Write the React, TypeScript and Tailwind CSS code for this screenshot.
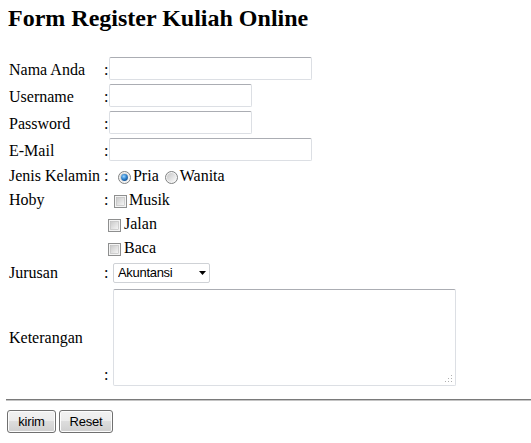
import React from 'react';

// old-style form controls, drawn to look like the classic IE theme
function Radio({ checked = false }: { checked?: boolean }) {
  return (
    <svg width="13" height="13" viewBox="0 0 13 13" className="inline-block">
      <defs>
        <linearGradient id="radioFill" x1="0" y1="0" x2="1" y2="1">
          <stop offset="0%" stopColor="#c6c6c6" />
          <stop offset="100%" stopColor="#fbfbfb" />
        </linearGradient>
        <radialGradient id="radioDot" cx="0.4" cy="0.35" r="0.7">
          <stop offset="0%" stopColor="#9fd8ff" />
          <stop offset="55%" stopColor="#2f83cf" />
          <stop offset="100%" stopColor="#114c8c" />
        </radialGradient>
      </defs>
      <circle cx="6.5" cy="6.5" r="6" fill="#f4f4f4" stroke="#7f8080" />
      <circle cx="6.5" cy="6.5" r="4.6" fill="url(#radioFill)" />
      {checked && <circle cx="6.5" cy="6.5" r="3.4" fill="url(#radioDot)" />}
    </svg>
  );
}

function Checkbox() {
  return (
    <svg width="13" height="13" viewBox="0 0 13 13" className="inline-block">
      <defs>
        <linearGradient id="boxFill" x1="0" y1="0" x2="1" y2="1">
          <stop offset="0%" stopColor="#c9c9c9" />
          <stop offset="100%" stopColor="#f7f7f7" />
        </linearGradient>
      </defs>
      <rect x="0.5" y="0.5" width="12" height="12" fill="#f4f4f4" stroke="#8e8f8f" />
      <rect x="2.5" y="2.5" width="8" height="8" fill="url(#boxFill)" stroke="#b9b9b9" strokeWidth="0.6" />
    </svg>
  );
}

const inputCls =
  'h-[23px] rounded-[2px] border border-[#dcdfe4] border-t-[#abadb3] bg-white outline-none';

const buttonCls =
  'h-[23px] rounded-[3px] border border-[#707070] bg-[linear-gradient(#f2f2f2_0%,#ebebeb_50%,#dddddd_50%,#cfcfcf_100%)] shadow-[inset_0_0_0_1px_#fcfcfc]';

export default function App() {
  return (
    <div className="min-h-screen bg-white pl-[8px] pt-[5px] font-['Liberation_Serif','Times_New_Roman',serif] text-[16px] text-black">
      <h1 className="text-[24px] font-bold leading-[27px]">Form Register Kuliah Online</h1>

      <form className="mt-[25px] flex flex-col" onSubmit={(e) => e.preventDefault()}>
        {/* text fields */}
        <div className="flex h-[23px] items-center">
          <span className="w-[96px] pl-[1px] pt-[2px]">Nama Anda</span>
          <span className="pt-[2px]">:</span>
          <input className={`ml-[1px] w-[203px] ${inputCls}`} />
        </div>
        <div className="mt-[4px] flex h-[23px] items-center">
          <span className="w-[96px] pl-[1px] pt-[2px]">Username</span>
          <span className="pt-[2px]">:</span>
          <input className={`ml-[1px] w-[143px] ${inputCls}`} />
        </div>
        <div className="mt-[4px] flex h-[23px] items-center">
          <span className="w-[96px] pl-[1px] pt-[2px]">Password</span>
          <span className="pt-[2px]">:</span>
          <input type="password" className={`ml-[1px] w-[143px] ${inputCls}`} />
        </div>
        <div className="mt-[4px] flex h-[23px] items-center">
          <span className="w-[96px] pl-[1px] pt-[2px]">E-Mail</span>
          <span className="pt-[2px]">:</span>
          <input className={`ml-[1px] w-[203px] ${inputCls}`} />
        </div>

        {/* radios and checkboxes */}
        <div className="mt-[3px] flex h-[24px] leading-[24px]">
          <span className="w-[96px] pl-[1px]">Jenis Kelamin</span>
          <div className="whitespace-nowrap">
            :<span className="ml-[9.5px] mr-[2px]"><Radio checked /></span>Pria
            <span className="ml-[6px] mr-[2px]"><Radio /></span>Wanita
          </div>
        </div>
        <div className="flex h-[24px] leading-[24px]">
          <span className="w-[96px] pl-[1px]">Hoby</span>
          <div className="whitespace-nowrap">
            :<span className="ml-[5.5px] mr-[2px]"><Checkbox /></span>Musik
          </div>
        </div>
        <div className="flex h-[24px] leading-[24px]">
          <span className="w-[96px] pl-[1px]"></span>
          <div className="whitespace-nowrap">
            <span className="ml-[4px] mr-[3px]"><Checkbox /></span>Jalan
          </div>
        </div>
        <div className="flex h-[24px] leading-[24px]">
          <span className="w-[96px] pl-[1px]"></span>
          <div className="whitespace-nowrap">
            <span className="ml-[4px] mr-[3px]"><Checkbox /></span>Baca
          </div>
        </div>

        {/* select */}
        <div className="mt-[2px] flex h-[22px] items-center leading-[22px]">
          <span className="w-[96px] pl-[1px]">Jurusan</span>
          <span>:</span>
          <div className="relative ml-[4.5px] flex">
            <select className="h-[20px] w-[97px] appearance-none rounded-[2px] border border-[#cfd2d6] bg-white pl-[4px] font-['Liberation_Sans',Arial,sans-serif] text-[13px] leading-[18px] tracking-[-0.3px] outline-none">
              <option>Akuntansi</option>
              <option>Manajemen</option>
              <option>Teknik Informatika</option>
            </select>
            <svg width="7" height="4" viewBox="0 0 7 4" className="pointer-events-none absolute right-[4px] top-[8px]">
              <path d="M0 0H7L3.5 4Z" fill="#000" />
            </svg>
          </div>
        </div>

        {/* textarea */}
        <div className="mt-[5px] flex h-[97px] items-center">
          <span className="w-[96px] pl-[1px]">Keterangan</span>
          <div className="flex h-full items-end">
            <span className="mb-[-1px]">:</span>
            <div className="relative ml-[4.5px]">
              <textarea className="block h-[97px] w-[343px] resize-none rounded-[2px] border border-[#dcdfe4] border-t-[#abadb3] bg-white outline-none" />
              <svg width="9" height="9" viewBox="0 0 9 9" className="pointer-events-none absolute bottom-[3px] right-[3px]">
                <g fill="#b0b0b0">
                  <rect x="7" y="1" width="1" height="1" />
                  <rect x="4" y="4" width="1" height="1" />
                  <rect x="7" y="4" width="1" height="1" />
                  <rect x="1" y="7" width="1" height="1" />
                  <rect x="4" y="7" width="1" height="1" />
                  <rect x="7" y="7" width="1" height="1" />
                </g>
              </svg>
            </div>
          </div>
        </div>

        <div className="mt-[13px] -ml-[2px] h-0 border-t border-b border-t-[#7a7a7a] border-b-[#c4c4c4]" />

        <div className="mt-[9px] -ml-[1px] flex gap-[3px] font-['Liberation_Sans',Arial,sans-serif] text-[13px] tracking-[-0.2px]">
          <button type="submit" className={`w-[49px] ${buttonCls}`}>
            kirim
          </button>
          <button type="reset" className={`w-[54px] ${buttonCls}`}>
            Reset
          </button>
        </div>
      </form>
    </div>
  );
}
